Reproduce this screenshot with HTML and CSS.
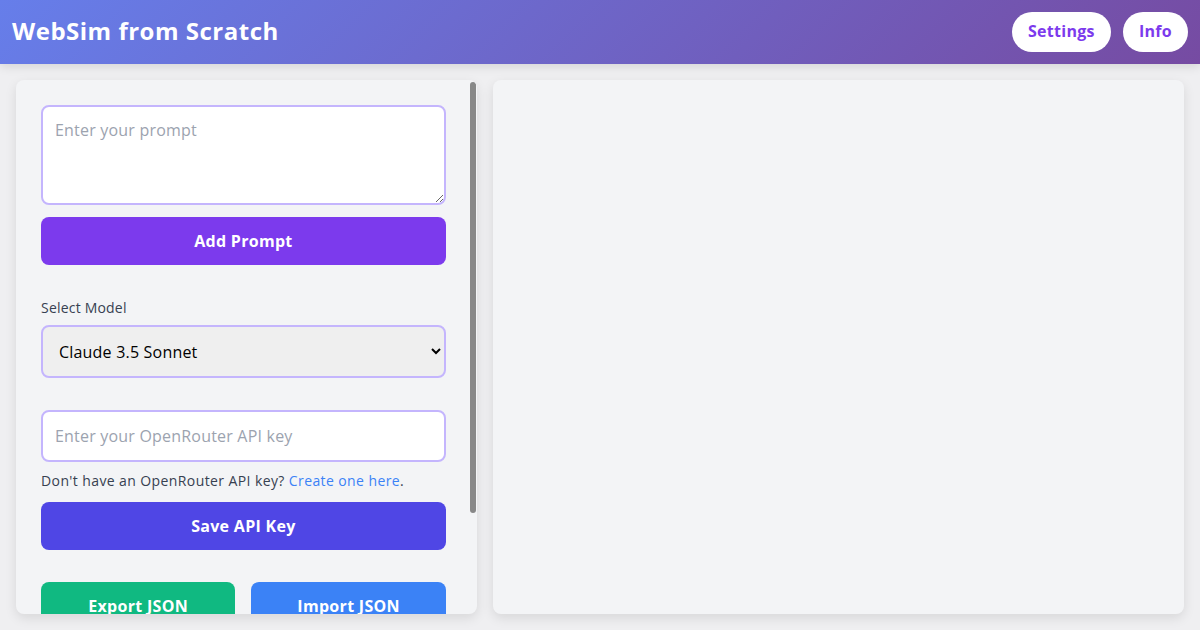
FILE: index.html
```html
<!DOCTYPE html>
<html lang="en">
<head>
  <meta charset="UTF-8">
  <meta name="viewport" content="width=device-width, initial-scale=1.0">
  <title>WebSim from Scratch</title>
  <link rel="stylesheet" href="styles.css">
</head>
<body>

  <header class="header">
    <h1>WebSim from Scratch</h1>
    <div class="header-buttons">
      <button class="pill">Settings</button>
      <button class="pill">Info</button>
    </div>
  </header>

  <main class="main">
    <aside class="sidebar">
      <div class="sidebar-scroll">
        <div class="section">
          <textarea class="prompt" placeholder="Enter your prompt"></textarea>
          <button class="button purple">Add Prompt</button>
        </div>

        <div class="section">
          <label for="model">Select Model</label>
          <select id="model">
            <option>Claude 3.5 Sonnet</option>
            <option>GPT-4o</option>
            <option>Llama 3.1 405B</option>
          </select>
        </div>

        <div class="section">
          <input type="text" class="field" placeholder="Enter your OpenRouter API key">
          <p class="help">Don't have an OpenRouter API key? <a href="#">Create one here</a>.</p>
          <button class="button indigo">Save API Key</button>
        </div>

        <div class="section row">
          <button class="button green">Export JSON</button>
          <button class="button blue">Import JSON</button>
        </div>
      </div>
      <!-- scrollbar thumb, the headless shot hides native ones -->
      <div class="scroll-thumb"></div>
    </aside>

    <section class="preview"></section>
  </main>

</body>
</html>
```

FILE: styles.css
```css
* {
  box-sizing: border-box;
}
body {
  font-family: 'Open Sans', sans-serif;
  background-color: #efeff1;
  margin: 0;
  height: 100vh;
  display: flex;
  flex-direction: column;
  overflow: hidden;
  color: #374151;
}
.header {
  height: 64px;
  padding: 0 12px;
  display: flex;
  align-items: center;
  justify-content: space-between;
  background: linear-gradient(135deg, #667eea 0%, #764ba2 100%);
  box-shadow: 0 2px 10px rgba(0, 0, 0, 0.12);
  position: relative;
  z-index: 1;
}
.header h1 {
  margin: 0;
  padding-bottom: 4px;
  color: #fff;
  font-size: 24px;
  font-weight: 700;
  letter-spacing: 0.5px;
}
.header-buttons {
  display: flex;
  gap: 12px;
}
.pill {
  height: 40px;
  padding: 0 16px 2px;
  border: none;
  border-radius: 20px;
  background: #fff;
  color: #7c3aed;
  font-family: inherit;
  font-size: 16px;
  font-weight: 700;
  letter-spacing: 0.3px;
  cursor: pointer;
}
.main {
  flex: 1;
  min-height: 0;
  display: flex;
  gap: 16px;
  padding: 16px;
}
.sidebar {
  flex: 0 0 calc((100% - 16px) * 0.4);
  position: relative;
  background: #f3f4f6;
  border-radius: 8px;
  box-shadow: 0 4px 12px rgba(0, 0, 0, 0.1);
  overflow: hidden;
}
.sidebar-scroll {
  height: 100%;
  padding: 25px 31px 24px 25px;
  overflow-y: auto;
}
.scroll-thumb {
  position: absolute;
  top: 2px;
  right: 1px;
  width: 6px;
  height: 431px;
  background: #888;
  border-radius: 3px;
}
.preview {
  flex: 1;
  background: #f3f4f6;
  border-radius: 8px;
  box-shadow: 0 4px 12px rgba(0, 0, 0, 0.1);
}
.section {
  display: flex;
  flex-direction: column;
  margin-bottom: 32px;
}
.section.row {
  flex-direction: row;
  gap: 16px;
}
.prompt {
  height: 100px;
  padding: 12px;
  border: 2px solid #c4b5fd;
  border-radius: 8px;
  font-family: inherit;
  font-size: 16px;
  letter-spacing: 0.2px;
  margin-bottom: 12px;
}
.prompt::placeholder, .field::placeholder {
  color: #9ca3af;
}
label {
  font-size: 14px;
  line-height: 21px;
  letter-spacing: 0.2px;
  margin-bottom: 7px;
}
select {
  height: 53px;
  padding: 0 12px;
  border: 2px solid #c4b5fd;
  border-radius: 8px;
  background: #efefef;
  color: #000;
  font-family: inherit;
  font-size: 16px;
  letter-spacing: 0.2px;
}
.field {
  height: 52px;
  padding: 0 12px;
  border: 2px solid #c4b5fd;
  border-radius: 8px;
  background: #fff;
  font-family: inherit;
  font-size: 16px;
  letter-spacing: 0.2px;
}
.help {
  margin: 8px 0 11px;
  font-size: 14px;
  line-height: 21px;
  letter-spacing: 0.4px;
}
.help a {
  color: #3b82f6;
  text-decoration: none;
}
.button {
  flex: none;
  height: 48px;
  border: none;
  border-radius: 8px;
  color: #fff;
  font-family: inherit;
  font-size: 16px;
  font-weight: 700;
  letter-spacing: 0.3px;
  cursor: pointer;
}
.row .button {
  flex: 1;
}
.purple {
  background: #7c3aed;
}
.indigo {
  background: #4f46e5;
}
.green {
  background: #10b981;
}
.blue {
  background: #3b82f6;
}
```
